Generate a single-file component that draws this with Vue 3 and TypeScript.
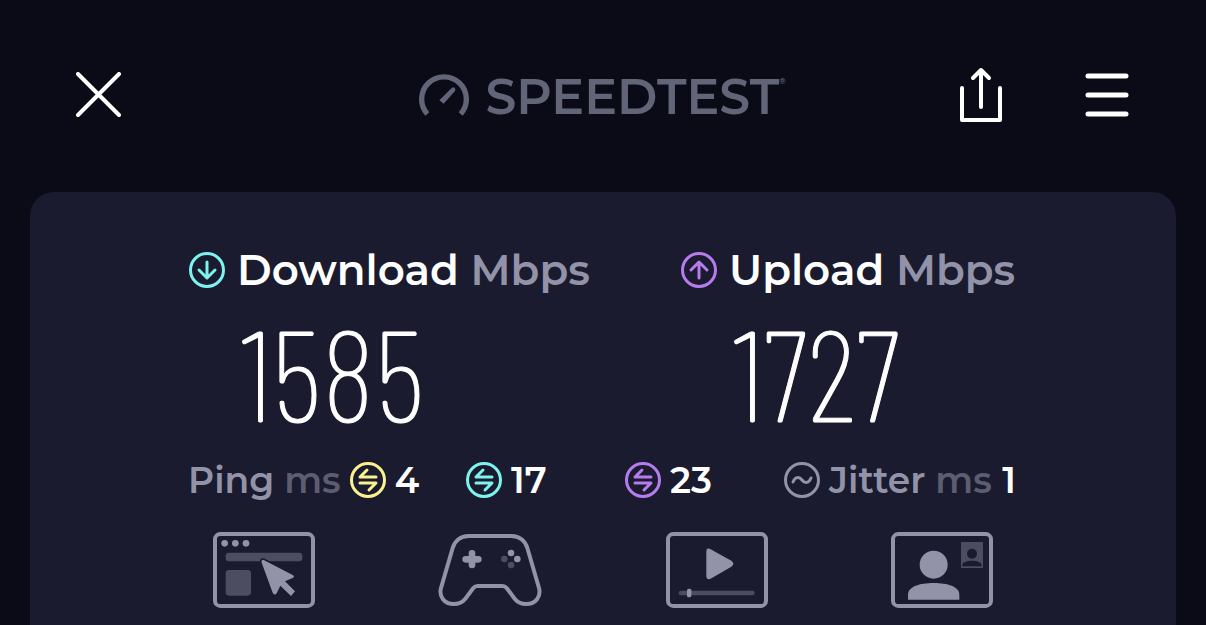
<script setup lang="ts">
interface Speed {
  kind: 'download' | 'upload'
  label: string
  unit: string
  value: number
}

interface Ping {
  kind: 'idle' | 'download' | 'upload'
  label: string
  value: number
}

const speeds: Speed[] = [
  { kind: 'download', label: 'Download', unit: 'Mbps', value: 1585 },
  { kind: 'upload', label: 'Upload', unit: 'Mbps', value: 1727 },
]

const pings: Ping[] = [
  { kind: 'idle', label: 'Idle ping', value: 4 },
  { kind: 'download', label: 'Download ping', value: 17 },
  { kind: 'upload', label: 'Upload ping', value: 23 },
]

const jitter = 1
</script>

<template>
  <div class="page">
    <header class="bar">
      <button class="icon-button" type="button" aria-label="Close">
        <svg width="46" height="46" viewBox="0 0 46 46" fill="none" stroke="currentColor" stroke-width="4" stroke-linecap="round">
          <path d="M2 2 43 43M43 2 2 43" />
        </svg>
      </button>

      <div class="brand">
        <svg width="50" height="42" viewBox="0 0 150 126" aria-hidden="true">
          <path d="M25 120A67 67 0 1 1 125 120" fill="none" stroke="currentColor" stroke-width="16" />
          <path d="M61 79 98 42Q103 38 107 42T108 51L74 89Z" fill="currentColor" />
        </svg>
        <span class="brand-name">SPEEDTEST</span><span class="mark">®</span>
      </div>

      <div class="actions">
        <button class="icon-button" type="button" aria-label="Share">
          <svg width="42" height="56" viewBox="0 0 42 56" fill="none" stroke="currentColor" stroke-width="4" stroke-linecap="round" stroke-linejoin="round">
            <path d="M2 21V53H40V21M21 40V3M13 11 21 3 29 11" />
          </svg>
        </button>
        <button class="icon-button" type="button" aria-label="Menu">
          <svg width="44" height="46" viewBox="0 0 44 46" fill="none" stroke="currentColor" stroke-width="5" stroke-linecap="round">
            <path d="M3 4H41M3 23H41M3 42H41" />
          </svg>
        </button>
      </div>
    </header>

    <main class="card">
      <div class="speeds">
        <section v-for="s in speeds" :key="s.kind" class="speed">
          <svg class="ring" :class="s.kind" viewBox="0 0 38 38" aria-hidden="true">
            <circle cx="19" cy="19" r="16.5" />
            <path v-if="s.kind === 'download'" d="M19 11V27M11 19 19 27 27 19" />
            <path v-else d="M19 27V11M11 19 19 11 27 19" />
          </svg>
          <h2 class="title">{{ s.label }} <span class="unit">{{ s.unit }}</span></h2>
          <p class="value">{{ s.value }}</p>
        </section>
      </div>

      <div class="latency">
        <div v-for="p in pings" :key="p.kind" class="stat">
          <span v-if="p.kind === 'idle'" class="name">Ping <span class="ms">ms</span></span>
          <svg class="ring" :class="p.kind" viewBox="0 0 38 38" role="img" :aria-label="p.label">
            <circle cx="19" cy="19" r="16.5" />
            <path d="M27 16H11L18 9M11 22H27L20 29" />
          </svg>
          <span class="number">{{ p.value }}</span>
        </div>
        <div class="stat">
          <svg class="ring jitter" viewBox="0 0 38 38" aria-hidden="true">
            <circle cx="19" cy="19" r="16.5" />
            <path d="M10 21C12 16 16 15 19 19S26 22 28 17" />
          </svg>
          <span class="name">Jitter <span class="ms">ms</span></span>
          <span class="number last">{{ jitter }}</span>
        </div>
      </div>

      <div class="uses">
        <svg width="102" height="76" viewBox="0 0 306 228" role="img" aria-label="Browsing">
          <rect class="line" x="6" y="6" width="294" height="216" rx="16" />
          <g class="solid">
            <circle cx="35" cy="34" r="10" />
            <circle cx="67" cy="34" r="10" />
            <circle cx="99" cy="34" r="10" />
          </g>
          <rect class="faint" x="38" y="62" width="230" height="26" rx="10" />
          <rect class="faint" x="38" y="114" width="76" height="77" rx="10" />
          <path class="cursor" d="M152 84 239 129Q247 134 239 138L216 148 246 178 234 192 202 161 191 184Q185 192 179 182L146 92Q144 82 152 84Z" />
        </svg>

        <svg width="104" height="76" viewBox="0 0 312 228" role="img" aria-label="Gaming">
          <path class="line" d="M92 12H220C246 12 262 28 268 48L303 168C310 194 293 216 265 216 248 216 238 210 230 200L206 168Q201 162 193 162H119Q111 162 106 168L82 200C74 210 64 216 47 216 19 216 2 194 9 168L44 48C50 28 66 12 92 12Z" />
          <path class="pad" d="M102 64V99M83 82H121" />
          <g class="solid">
            <circle cx="219" cy="63" r="10" />
            <circle cx="238" cy="81" r="10" />
          </g>
          <g class="faint">
            <circle cx="199" cy="81" r="10" />
            <circle cx="219" cy="99" r="10" />
          </g>
        </svg>

        <svg width="102" height="76" viewBox="0 0 306 228" role="img" aria-label="Streaming">
          <rect class="line" x="6" y="6" width="294" height="216" rx="16" />
          <path class="solid" d="M121 60Q121 45 134 52L196 86Q208 95 196 104L134 140Q121 145 121 132Z" />
          <rect class="faint" x="38" y="176" width="228" height="14" rx="7" />
          <rect class="solid" x="63" y="170" width="13" height="26" rx="5" />
        </svg>

        <svg width="102" height="76" viewBox="0 0 306 228" role="img" aria-label="Video calls">
          <rect class="line" x="6" y="6" width="294" height="216" rx="16" />
          <circle class="solid" cx="128" cy="98" r="42" />
          <path class="solid" d="M51 203V188C51 164 86 153 128 153S205 164 205 188V203Z" />
          <rect class="faint" x="210" y="30" width="66" height="78" />
          <g class="cutout">
            <circle cx="243" cy="65" r="15" />
            <path d="M214 103V99C214 91 227 86 243 86S272 91 272 99V103Z" />
          </g>
        </svg>
      </div>
    </main>
  </div>
</template>

<style>
body {
  margin: 0;
  background: #0b0b17;
}
</style>

<style scoped>
.page {
  display: flex;
  flex-direction: column;
  min-height: 100vh;
  box-sizing: border-box;
  background: #0b0b17;
  color: #fff;
  font-family: Montserrat, Inter, "Liberation Sans", sans-serif;
  overflow: hidden;
}

.bar {
  display: grid;
  grid-template-columns: 1fr auto 1fr;
  align-items: center;
  height: 192px;
  padding: 0 77px 2px 76px;
  box-sizing: border-box;
}

.icon-button {
  display: flex;
  justify-self: start;
  padding: 0;
  border: 0;
  background: none;
  color: #fff;
  cursor: pointer;
}

.brand {
  display: flex;
  align-items: center;
  color: #626478;
}

.brand-name {
  margin: 4px 0 0 16px;
  font-size: 49px;
  line-height: 56px;
  font-weight: 600;
}

.mark {
  align-self: flex-start;
  margin-top: 10px;
  font-size: 8px;
  line-height: 12px;
  font-weight: 600;
}

.actions {
  display: flex;
  justify-self: end;
  align-items: center;
  gap: 83px;
}

.card {
  flex: 1;
  margin: 0 30px;
  padding: 53px 160px 16px 158px;
  border-radius: 24px 24px 0 0;
  background: #1a1b2e;
}

.speeds {
  display: grid;
  grid-template-columns: minmax(0, 492fr) minmax(0, 336fr);
}

.speed {
  display: grid;
  grid-template-columns: 38px auto;
  column-gap: 11px;
  align-items: center;
}

.ring {
  flex: none;
  width: 38px;
  height: 38px;
  fill: none;
  stroke: currentColor;
  stroke-width: 3;
  stroke-linecap: round;
  stroke-linejoin: round;
}

.download {
  color: #7df3ee;
}

.upload {
  color: #b77bf0;
}

.idle {
  color: #faf28f;
}

.jitter {
  color: #9293a8;
}

.title {
  margin: 0;
  font-size: 42px;
  line-height: 50px;
  font-weight: 600;
  white-space: nowrap;
}

.unit {
  color: #9293a8;
}

.value {
  grid-column: 2;
  margin: 19px 0 30px;
  padding-left: 4px;
  font-family: "Barlow Condensed", "Roboto Condensed", Roboto, sans-serif;
  font-size: 128px;
  line-height: 114px;
  font-weight: 200;
  -webkit-text-stroke: 1px currentColor;
}

.latency {
  display: grid;
  grid-template-columns: 277fr 159fr 159fr 233fr;
  font-size: 36px;
  line-height: 44px;
}

.stat {
  display: flex;
  align-items: center;
  gap: 8px;
  white-space: nowrap;
}

.name {
  color: #9293a8;
  font-weight: 600;
}

.ms {
  color: #5c5d70;
}

.number {
  font-weight: 600;
}

.last {
  margin-left: auto;
}

.uses {
  display: flex;
  justify-content: space-between;
  margin: 30px 23px 0 25px;
}

.line {
  fill: none;
  stroke: #9293a8;
  stroke-width: 12;
}

.solid {
  fill: #9293a8;
}

.faint {
  fill: #4c4d60;
}

.cursor {
  fill: #9293a8;
  stroke: #1a1b2e;
  stroke-width: 10;
  paint-order: stroke;
}

.pad {
  stroke: #9293a8;
  stroke-width: 20;
  stroke-linecap: round;
}

.cutout {
  fill: #1a1b2e;
}
</style>
